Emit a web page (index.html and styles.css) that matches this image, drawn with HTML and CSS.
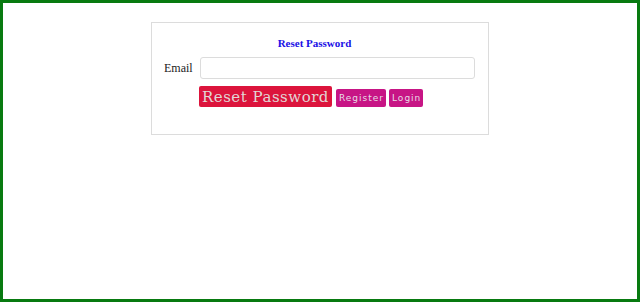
FILE: index.html
```html
<!DOCTYPE html>
<html lang="en">
<head>
    <meta charset="UTF-8">
    <title>Reset Password</title>
    <link rel="stylesheet" href="styles.css">
</head>
<body>

    <!-- Reset box -->
    <div class="reset-box">
        <h3 class="reset-title">Reset Password</h3>

        <form class="reset-form">
            <div class="form-row">
                <label for="email">Email</label>
                <input type="email" id="email" name="email">
            </div>
            <div class="btn-row">
                <button type="submit" class="reset-btn">Reset Password</button>
                <a href="#" class="link-btn">Register</a>
                <a href="#" class="link-btn">Login</a>
            </div>
        </form>
    </div>

</body>
</html>
```

FILE: styles.css
```css
/* page frame */
html, body {
    height: 100%;
}

body {
    margin: 0;
    box-sizing: border-box;
    border: 3px solid #087a10;
    font-family: 'Liberation Serif', serif;
    background: #fff;
}

/* box in the middle */
.reset-box {
    width: 338px;
    height: 113px;
    box-sizing: border-box;
    margin: 19px auto 0;
    border: 1px solid #dcdcdc;
    padding: 14px 13px 0 12px;
}

.reset-title {
    margin: 0 10px 8px 0;
    text-align: center;
    font-size: 11px;
    font-weight: bold;
    color: #1a10e6;
}

.form-row {
    display: flex;
    align-items: center;
    gap: 7px;
}

.form-row label {
    font-size: 12px;
    color: #222;
}

.form-row input {
    flex: 1;
    height: 22px;
    box-sizing: border-box;
    border: 1px solid #dcdcdc;
    border-radius: 3px;
    outline: none;
}

.btn-row {
    display: flex;
    align-items: flex-end;
    gap: 3px;
    margin: 7px 0 0 35px;
}

.reset-btn {
    background: #dc143c;
    color: #e2d6d6;
    border: none;
    border-radius: 2px;
    padding: 0 3px;
    margin-right: 1px;
    height: 21px;
    font-family: 'DejaVu Serif', serif;
    font-size: 15px;
    letter-spacing: 0.5px;
    line-height: 20px;
}

.link-btn {
    background: #c71585;
    color: #e8dce6;
    text-decoration: none;
    border-radius: 2px;
    padding: 0 2px 0 3px;
    height: 18px;
    line-height: 18px;
    font-family: 'DejaVu Sans', sans-serif;
    font-size: 9px;
    letter-spacing: 1px;
}
```
